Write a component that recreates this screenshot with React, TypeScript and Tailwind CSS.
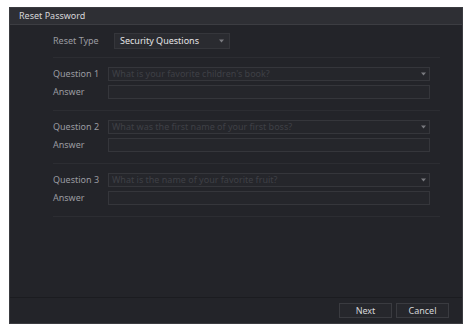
const questions = [
  "What is your favorite children's book?",
  "What was the first name of your first boss?",
  "What is the name of your favorite fruit?",
];

const Caret = () => (
  <svg width="5" height="4" viewBox="0 0 5 4" className="shrink-0">
    <path d="M0 0.5 L5 0.5 L2.5 3.5 Z" fill="#7a7b80" />
  </svg>
);

const App = () => {
  return (
    <div
      className="w-[474px] h-[335px] bg-white pt-[7px] pl-[9px]"
      style={{ fontFamily: '"Noto Sans", "Open Sans", sans-serif' }}
    >
      <div className="w-[454px] h-[317px] bg-[#232429] border border-[#3a3b40] flex flex-col">
        <div className="h-[17px] bg-[#2e2f34] border-b border-[#3c3d42] flex items-center pl-[9px] text-[9px] text-[#d6d6d8]">
          Reset Password
        </div>

        <div className="flex-1 flex flex-col pl-[43px] pr-[22px]">
          <div className="flex items-center mt-[7px] h-[17px]">
            <span className="w-[61px] text-[9px] text-[#9a9ba0]">Reset Type</span>
            <div className="w-[116px] h-[16px] bg-[#2a2b30] border border-[#35363b] flex items-center justify-between px-[5px]">
              <span className="text-[9px] text-[#e4e4e6]">Security Questions</span>
              <Caret />
            </div>
          </div>
          <div className="mt-[8px] h-px bg-[#2c2d32]" />

          {questions.map((q, i) => (
            <div key={q} className="flex flex-col">
              <div className="flex flex-col gap-[4px] mt-[9px] mr-[10px]">
                <div className="flex items-center h-[14px]">
                  <span className="w-[55px] text-[9px] text-[#9a9ba0]">Question {i + 1}</span>
                  <div className="flex-1 h-[14px] border border-[#35363b] bg-[#25262b] flex items-center justify-between px-[3px]">
                    <span className="text-[9px] text-[#3f4046] whitespace-nowrap">{q}</span>
                    <Caret />
                  </div>
                </div>
                <div className="flex items-center h-[14px]">
                  <span className="w-[55px] text-[9px] text-[#9a9ba0]">Answer</span>
                  <div className="flex-1 h-[14px] border border-[#35363b] bg-[#25262b]" />
                </div>
              </div>
              <div className="mt-[11px] h-px bg-[#2c2d32]" />
            </div>
          ))}
        </div>

        <div className="h-[26px] border-t border-[#1b1c20] flex items-center justify-end gap-[4px] pr-[13px]">
          <button className="w-[53px] h-[15px] bg-[#26272c] border border-[#3a3b40] text-[9px] text-[#d6d6d8] flex items-center justify-center">
            Next
          </button>
          <button className="w-[53px] h-[15px] bg-[#26272c] border border-[#3a3b40] text-[9px] text-[#d6d6d8] flex items-center justify-center">
            Cancel
          </button>
        </div>
      </div>
    </div>
  );
};

export default App;
